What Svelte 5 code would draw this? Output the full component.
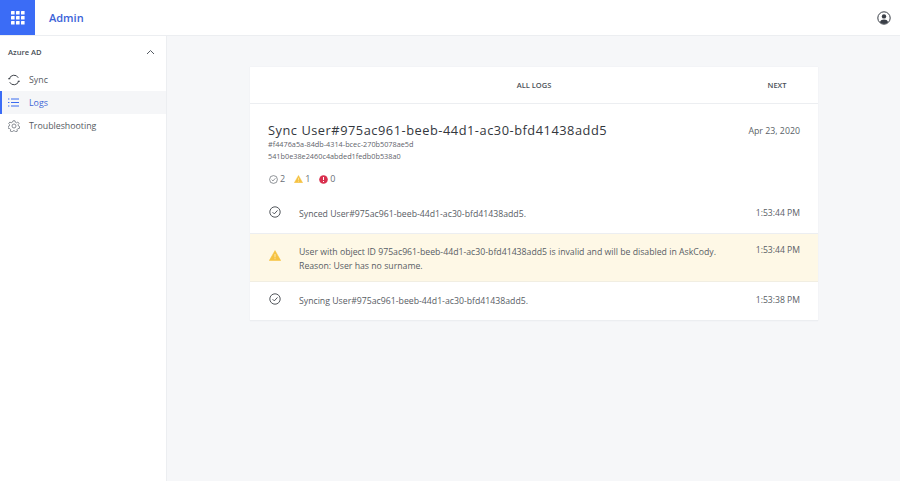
<script>
  const nav = [
    { label: 'Sync', icon: 'sync' },
    { label: 'Logs', icon: 'logs', active: true },
    { label: 'Troubleshooting', icon: 'gear' }
  ];
  const rows = [
    { type: 'ok', lines: ['Synced User#975ac961-beeb-44d1-ac30-bfd41438add5.'], time: '1:53:44 PM' },
    { type: 'warn', lines: ['User with object ID 975ac961-beeb-44d1-ac30-bfd41438add5 is invalid and will be disabled in AskCody.', 'Reason: User has no surname.'], time: '1:53:44 PM' },
    { type: 'ok', lines: ['Syncing User#975ac961-beeb-44d1-ac30-bfd41438add5.'], time: '1:53:38 PM' }
  ];
  const dots = Array.from({ length: 9 }, (_, i) => [i % 3, Math.floor(i / 3)]);
</script>

{#snippet check(size)}
  <svg width={size} height={size} viewBox="0 0 12 12" fill="none" stroke="currentColor" stroke-width="0.9">
    <circle cx="6" cy="6" r="5.2" />
    <path d="M3.6 6.2 5.3 7.9 8.5 4.4" />
  </svg>
{/snippet}

{#snippet warn(w, h)}
  <svg width={w} height={h} viewBox="0 0 12 11">
    <path d="M6 .6 11.7 10.6H.3Z" fill="#f5c242" stroke="#f5c242" stroke-width=".6" stroke-linejoin="round" />
    <path d="M6 4v3.4M6 8.3v.9" stroke="#fff3cf" stroke-width=".8" />
  </svg>
{/snippet}

<div class="app">
  <header class="top">
    <div class="tile">
      <svg width="14" height="14" viewBox="0 0 14 14" fill="#fff">
        {#each dots as [x, y]}
          <rect x={x * 5} y={y * 5} width="3.6" height="3.6" rx=".5" />
        {/each}
      </svg>
    </div>
    <div class="brand">Admin</div>
    <svg class="user" width="14" height="14" viewBox="0 0 14 14">
      <circle cx="7" cy="7" r="6.2" fill="none" stroke="#3a3f47" stroke-width="1" />
      <circle cx="7" cy="5.4" r="2.2" fill="#3a3f47" />
      <path d="M2.9 11.2C3.5 9.2 5 8.5 7 8.5s3.5.7 4.1 2.7A6 6 0 0 1 7 13a6 6 0 0 1-4.100-1.800Z" fill="#3a3f47" />
    </svg>
  </header>

  <div class="main">
    <aside class="side">
      <div class="group">
        <span>Azure AD</span>
        <svg width="9" height="6" viewBox="0 0 9 6" fill="none" stroke="#555b63" stroke-width="1"><path d="M1 5 4.500 1.500 8 5" /></svg>
      </div>
      <nav>
        {#each nav as item}
          <div class="item" class:active={item.active}>
            <span class="ic">
              {#if item.icon === 'sync'}
                <svg width="12" height="12" viewBox="0 0 12 12" fill="none" stroke="#3f444b" stroke-width="1">
                  <path d="M1.300 5.200A4.800 4.800 0 0 1 10.300 3.800M10.700 6.800A4.800 4.800 0 0 1 1.700 8.200" />
                  <path d="M.2 4.700h2M9.800 7.300h2" />
                </svg>
              {:else if item.icon === 'logs'}
                <svg width="11" height="9" viewBox="0 0 11 9" stroke="#3b6cf0" stroke-width="1">
                  <path d="M0 1h1.400M3 1h8M0 4.500h1.400M3 4.500h8M0 8h1.400M3 8h8" />
                </svg>
              {:else}
                <svg width="12" height="12" viewBox="0 0 12 12" fill="none" stroke="#7d828a" stroke-width=".9">
                  <path d="M5 .8h2l.3 1.400 1.300.6 1.200-.8 1.200 1.500-.9 1.100.3 1.400 1.300.6-.4 1.900-1.400.1-.9 1.100.4 1.400-1.800.8-.9-1.100H5l-.9 1.100-1.800-.8.4-1.400-.9-1.100-1.400-.1-.4-1.900 1.300-.6.3-1.400-.9-1.100 1.200-1.500 1.200.8 1.300-.6Z" />
                  <circle cx="6" cy="6" r="2" />
                </svg>
              {/if}
            </span>
            <span>{item.label}</span>
          </div>
        {/each}
      </nav>
    </aside>

    <main class="content">
      <section class="card">
        <div class="cardhead">
          <span></span>
          <span class="all">ALL LOGS</span>
          <span class="next">NEXT</span>
        </div>
        <div class="summary">
          <div class="sumtext">
            <h1>Sync User#975ac961-beeb-44d1-ac30-bfd41438add5</h1>
            <div class="hash">#f4476a5a-84db-4314-bcec-270b5078ae5d</div>
            <div class="hash second">541b0e38e2460c4abded1fedb0b538a0</div>
            <div class="counts">
              <span class="count"><span class="cic">{@render check(9)}</span>2</span>
              <span class="count"><span class="cic">{@render warn(9, 8)}</span>1</span>
              <span class="count">
                <svg width="9" height="9" viewBox="0 0 9 9"><circle cx="4.500" cy="4.500" r="4.300" fill="#d9304f" /><path d="M4.500 2v3M4.500 6v1" stroke="#fff" stroke-width="1" /></svg>
                0
              </span>
            </div>
          </div>
          <div class="date">Apr 23, 2020</div>
        </div>
        {#each rows as row}
          <div class="row" class:warning={row.type === 'warn'}>
            <span class="rowic">
              {#if row.type === 'ok'}{@render check(12)}{:else}{@render warn(12, 11)}{/if}
            </span>
            <div class="msg">
              {#each row.lines as line}<div>{line}</div>{/each}
            </div>
            <div class="time">{row.time}</div>
          </div>
        {/each}
      </section>
    </main>
  </div>
</div>

<style>
  :global(body) {
    margin: 0;
    background: #f6f7f9;
    font-family: "Open Sans", "Noto Sans", sans-serif;
    color: #4a4f57;
  }
  .app { height: 481px; display: flex; flex-direction: column; overflow: hidden; }
  .top {
    height: 35px;
    flex: none;
    display: flex;
    align-items: center;
    background: #fff;
    border-bottom: 1px solid #eceef1;
    padding-right: 10px;
  }
  .tile {
    width: 35px;
    height: 35px;
    background: #3b6cf6;
    display: flex;
    align-items: center;
    justify-content: center;
  }
  .brand { margin-left: 14px; font-size: 11px; font-weight: 600; color: #3b62d8; flex: 1; }
  .main { flex: 1; display: flex; min-height: 0; }
  .side { width: 166px; flex: none; background: #fff; border-right: 1px solid #eceef1; }
  .group {
    display: flex;
    align-items: center;
    justify-content: space-between;
    padding: 6px 11px 0 8px;
    height: 20px;
    font-size: 7.600px;
    font-weight: 600;
    color: #4a4f57;
  }
  nav { padding-top: 7px; }
  .item {
    height: 23px;
    display: flex;
    align-items: center;
    font-size: 8.800px;
    color: #555a62;
    border-left: 2px solid transparent;
  }
  .item:first-child { height: 22px; }
  .ic { width: 21px; margin-left: 6px; display: flex; align-items: center; }
  .item.active { background: #f5f6f8; border-left-color: #3b6cf6; color: #3f66d6; }
  .content { flex: 1; padding: 31px 82px 0 83px; }
  .card { background: #fff; box-shadow: 0 0 1px #e3e5e9; }
  .cardhead {
    height: 36px;
    display: grid;
    grid-template-columns: 82px 1fr 82px;
    align-items: center;
    text-align: center;
    border-bottom: 1px solid #eceef1;
    font-size: 7.500px;
    font-weight: 600;
    color: #4a4f57;
  }
  .summary { display: flex; justify-content: space-between; padding: 19px 18px 0 18px; height: 73px; }
  h1 { margin: 0 0 2px; font-size: 12.800px; font-weight: 500; line-height: 14px; letter-spacing: .53px; color: #33373d; }
  .hash { font-size: 7.300px; line-height: 11px; color: #5f646c; }
  .hash.second { margin-top: 1px; }
  .counts { display: flex; gap: 9px; margin-top: 11px; padding-left: 1px; font-size: 9px; line-height: 12px; color: #6a6f77; }
  .count { display: inline-flex; align-items: center; gap: 2px; }
  .cic { display: inline-flex; color: #5a5f67; }
  .date { font-size: 8.800px; color: #5a5f67; line-height: 14px; padding-top: 1px; }
  .row {
    display: flex;
    align-items: flex-start;
    padding: 10px 18px 0 19px;
    box-sizing: border-box;
    height: 38px;
    border-bottom: 1px solid #eceef1;
    font-size: 8.720px;
    color: #585d65;
  }
  .row:last-child { height: 39px; padding-top: 11px; }
  .row.warning { background: #fef8e6; height: 48px; border-bottom: 1px solid #f1eee2; padding-top: 9px; }
  .rowic { width: 30px; flex: none; display: flex; color: #3f444b; }
  .row.warning .rowic { padding-top: 7px; }
  .msg { flex: 1; line-height: 15px; padding-top: 1px; }
  .row.warning .msg { line-height: 14px; padding-top: 1.500px; }
  .time { font-size: 8.600px; line-height: 15px; }
  .user { flex: none; margin-right: -1px; }
</style>
